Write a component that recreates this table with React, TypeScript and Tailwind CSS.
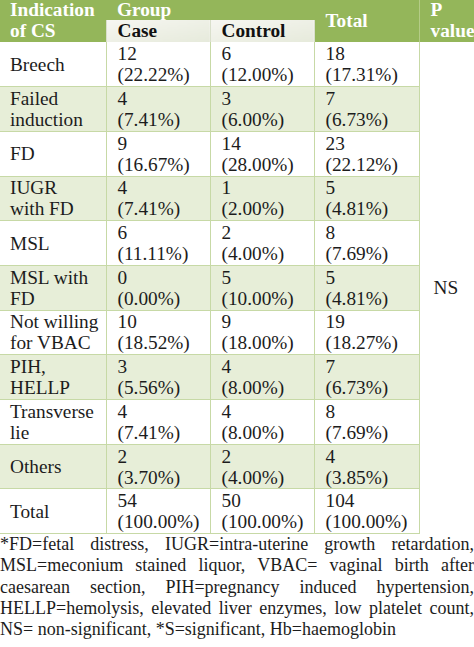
import React from 'react';

type Row = {
  label: string[];
  caseVal: string[];
  control: string[];
  total: string[];
};

const rows: Row[] = [
  { label: ['Breech'], caseVal: ['12', '(22.22%)'], control: ['6', '(12.00%)'], total: ['18', '(17.31%)'] },
  { label: ['Failed', 'induction'], caseVal: ['4', '(7.41%)'], control: ['3', '(6.00%)'], total: ['7', '(6.73%)'] },
  { label: ['FD'], caseVal: ['9', '(16.67%)'], control: ['14', '(28.00%)'], total: ['23', '(22.12%)'] },
  { label: ['IUGR', 'with FD'], caseVal: ['4', '(7.41%)'], control: ['1', '(2.00%)'], total: ['5', '(4.81%)'] },
  { label: ['MSL'], caseVal: ['6', '(11.11%)'], control: ['2', '(4.00%)'], total: ['8', '(7.69%)'] },
  { label: ['MSL with', 'FD'], caseVal: ['0', '(0.00%)'], control: ['5', '(10.00%)'], total: ['5', '(4.81%)'] },
  { label: ['Not willing', 'for VBAC'], caseVal: ['10', '(18.52%)'], control: ['9', '(18.00%)'], total: ['19', '(18.27%)'] },
  { label: ['PIH,', 'HELLP'], caseVal: ['3', '(5.56%)'], control: ['4', '(8.00%)'], total: ['7', '(6.73%)'] },
  { label: ['Transverse', 'lie'], caseVal: ['4', '(7.41%)'], control: ['4', '(8.00%)'], total: ['8', '(7.69%)'] },
  { label: ['Others'], caseVal: ['2', '(3.70%)'], control: ['2', '(4.00%)'], total: ['4', '(3.85%)'] },
  { label: ['Total'], caseVal: ['54', '(100.00%)'], control: ['50', '(100.00%)'], total: ['104', '(100.00%)'] },
];

function Lines({ lines }: { lines: string[] }) {
  return (
    <>
      {lines.map((l, i) => (
        <div key={i} className="whitespace-nowrap">
          {l}
        </div>
      ))}
    </>
  );
}

export default function App() {
  return (
    <div className="w-[474px] h-[647px] overflow-hidden bg-white [font-family:'Liberation_Serif',serif] text-[#1c1c1c]">
      <table className="-mt-[1px] w-[510px] table-fixed border-collapse text-[19.3px] leading-[21px]">
        <colgroup>
          <col className="w-[106px]" />
          <col className="w-[104px]" />
          <col className="w-[104px]" />
          <col className="w-[105px]" />
          <col className="w-[91px]" />
        </colgroup>
        <thead>
          {/* header row 1 */}
          <tr className="h-[20px]">
            <th rowSpan={2} className="bg-[#94b65a] pl-[10px] text-left align-top font-bold text-white">
              Indication
              <br />
              of CS
            </th>
            <th colSpan={2} className="bg-[#94b65a] pl-[11px] text-left align-top font-bold text-white">
              Group
            </th>
            <th rowSpan={2} className="bg-[#94b65a] pl-[11px] text-left align-middle font-bold text-white">
              Total
            </th>
            <th
              rowSpan={2}
              className="border-l border-[#b4cc86] bg-[#94b65a] pl-[11px] text-left align-top font-bold text-white"
            >
              P
              <br />
              value
            </th>
          </tr>
          {/* header row 2 */}
          <tr className="h-[22px] leading-[22px]">
            <th className="border-l border-r border-[#d9dfcb] bg-gradient-to-br from-[#f6f6f1] to-[#e6eadb] pl-[11px] text-left font-bold text-[#111]">
              Case
            </th>
            <th className="border-r border-[#d9dfcb] bg-gradient-to-br from-[#f6f6f1] to-[#e6eadb] pl-[11px] text-left font-bold text-[#111]">
              Control
            </th>
          </tr>
        </thead>
        <tbody>
          {rows.map((r, i) => {
            const band = i % 2 === 1 ? 'bg-[#e7eed8]' : 'bg-white';
            return (
              <tr key={i} className="h-[44.7px]">
                <td className={`${band} border-b border-r border-[#c7d9a6] pl-[10px] align-middle`}>
                  <Lines lines={r.label} />
                </td>
                <td className={`${band} border-b border-r border-[#c7d9a6] pl-[11px] align-middle`}>
                  <Lines lines={r.caseVal} />
                </td>
                <td className={`${band} border-b border-r border-[#c7d9a6] pl-[11px] align-middle`}>
                  <Lines lines={r.control} />
                </td>
                <td className={`${band} border-b border-r border-[#c7d9a6] pl-[11px] align-middle`}>
                  <Lines lines={r.total} />
                </td>
                {i === 0 && (
                  <td rowSpan={rows.length} className="bg-white pl-[14px] align-middle">
                    NS
                  </td>
                )}
              </tr>
            );
          })}
        </tbody>
      </table>
      <p className="w-[474px] text-justify text-[18px] leading-[21.3px] text-[#1c1c1c]">
        *FD=fetal distress, IUGR=intra-uterine growth retardation, MSL=meconium stained liquor, VBAC= vaginal birth
        after caesarean section, PIH=pregnancy induced hypertension, HELLP=hemolysis, elevated liver enzymes, low
        platelet count, NS= non-significant, *S=significant, Hb=haemoglobin
      </p>
    </div>
  );
}
